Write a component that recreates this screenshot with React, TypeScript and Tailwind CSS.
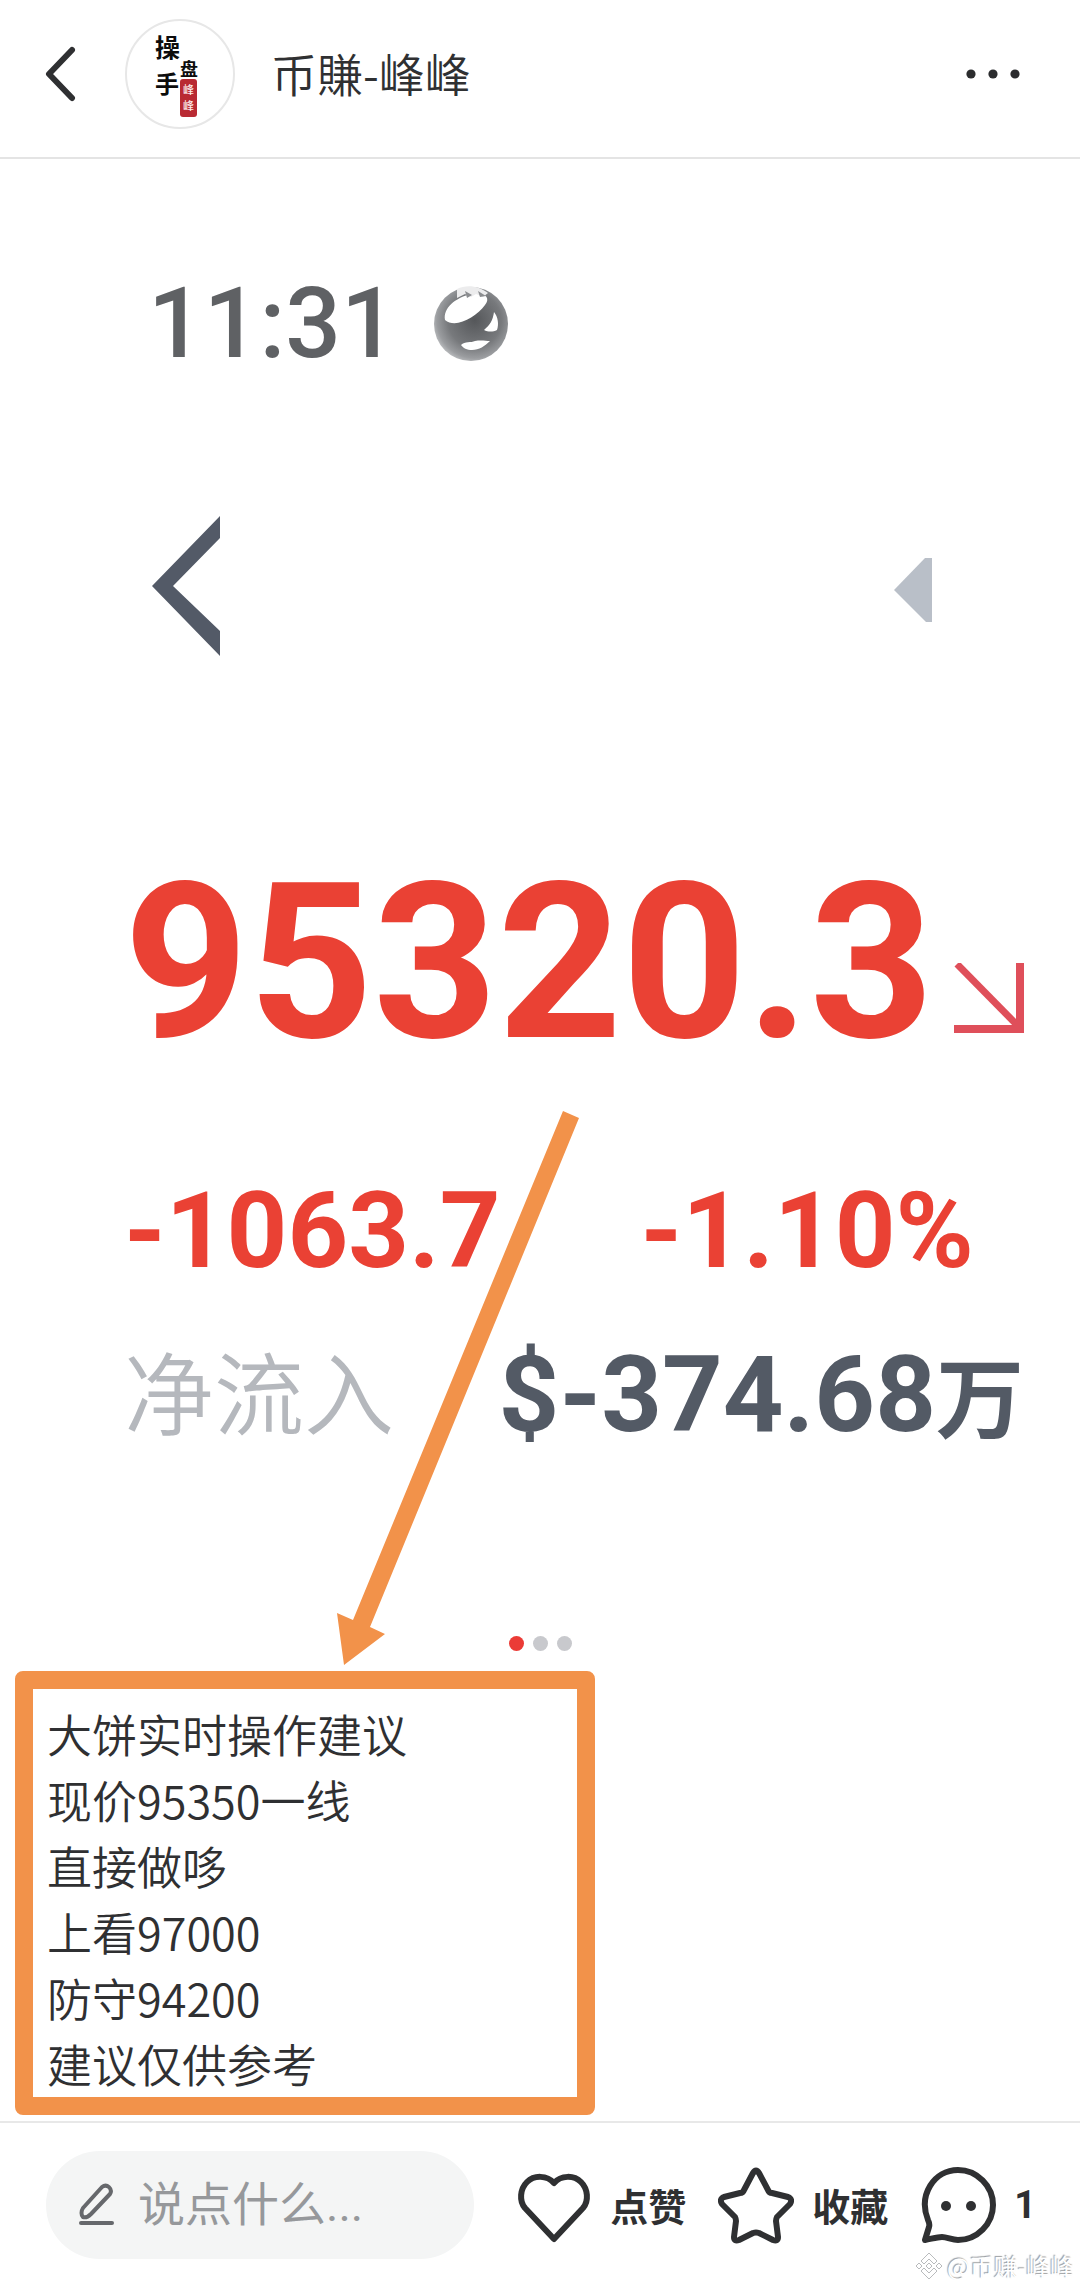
// src/pages/PostDetail.tsx
import { useState } from "react";

const ADVICE = [
  "大饼实时操作建议",
  "现价95350一线",
  "直接做哆",
  "上看97000",
  "防守94200",
  "建议仅供参考",
];

const SLIDES = [0, 1, 2];

function Avatar() {
  return (
    <svg viewBox="0 0 110 110" className="h-[110px] w-[110px] shrink-0" role="img" aria-label="操盘手峰峰">
      <circle cx="55" cy="55" r="54" fill="#fff" stroke="#e7e7e7" strokeWidth="2" />
      <g fill="#0c0c0c" fontWeight="700" className="font-['Noto_Sans_CJK_SC',sans-serif]">
        <text x="30" y="38" fontSize="25">操</text>
        <text x="55" y="57" fontSize="18">盘</text>
        <text x="30" y="74" fontSize="24">手</text>
      </g>
      <rect x="55" y="60" width="17" height="38" rx="3" fill="#b92a33" />
      <g fill="#fbe9e9" fontSize="11" fontWeight="500" className="font-['Noto_Sans_CJK_SC',sans-serif]">
        <text x="58" y="75">峰</text>
        <text x="58" y="91">峰</text>
      </g>
    </svg>
  );
}

function Globe() {
  return (
    <svg viewBox="0 0 76 76" className="h-[76px] w-[76px]" aria-hidden="true">
      <defs>
        <radialGradient id="globe" cx="0.55" cy="0.45" r="0.6">
          <stop offset="0" stopColor="#55575a" />
          <stop offset="0.6" stopColor="#77797c" />
          <stop offset="0.85" stopColor="#9a9c9f" />
          <stop offset="1" stopColor="#c4c6c8" />
        </radialGradient>
      </defs>
      <circle cx="38" cy="38" r="37" fill="url(#globe)" />
      <path d="M12 34C10 22 22 12 38 8c14-3 20 4 14 11-9 12-29 24-40 15z" fill="#fff" />
      <path d="M24 3c10-5 22-3 31 4l-5 4-7-3-5 3-6-3-8 4z" fill="#ececed" />
      <path d="M32 5l7 4-5 3zM45 5l8 5-6 1z" fill="#8b8d90" />
      <path d="M51 44c6-5 9-10 10-18 4 5 5 12 3 18-4 2-9 2-13 0z" fill="#fff" />
      <path d="M28 59c4-4 10-2 14-4 6-1 11 0 15 0-5 5-11 9-18 9-5 0-9-2-11-5z" fill="#fff" />
    </svg>
  );
}

export default function PostDetail() {
  const [slide, setSlide] = useState(0);
  const [comment, setComment] = useState("");

  return (
    <div className="flex min-h-screen flex-col bg-white font-['Noto_Sans_CJK_SC',sans-serif] text-[#2f3032]">
      {/* Header */}
      <header className="flex items-center border-b-2 border-[#e4e4e4] pt-[19px] pr-[60px] pb-7 pl-[45px]">
        <button type="button" aria-label="返回" className="mr-12">
          <svg viewBox="0 0 32 56" className="h-14 w-8" fill="none" stroke="#2f3032" strokeWidth="6" strokeLinecap="round" strokeLinejoin="round">
            <path d="M27 4 4 28l23 24" />
          </svg>
        </button>
        <Avatar />
        <h1 className="ml-9 flex-1 pb-1 text-[46px] leading-[56px] font-[350]">币賺-峰峰</h1>
        <button type="button" aria-label="更多">
          <svg viewBox="0 0 54 10" className="h-[10px] w-[54px]" fill="#2b2c2e">
            <circle cx="5" cy="5" r="4.600" />
            <circle cx="27" cy="5" r="4.600" />
            <circle cx="49" cy="5" r="4.600" />
          </svg>
        </button>
      </header>

      <main className="relative flex-1">
        {/* Post picture */}
        <section className="font-[Roboto,'Noto_Sans_CJK_SC',sans-serif]">
          <div className="flex items-center gap-9 pt-[105px] pl-[148px] text-[#5f6164]">
            <span className="text-[98px] leading-[120px] font-medium">11:31</span>
            <Globe />
          </div>

          <div className="flex items-center justify-between pt-[132px] pr-[148px] pl-[152px]">
            <svg viewBox="0 0 68 140" className="h-[140px] w-[68px]" fill="#535a67">
              <path d="M68 0v22L21 70l47 45v25L0 70z" />
            </svg>
            <svg viewBox="0 0 38 64" className="mt-2 h-16 w-[38px]" fill="#b9bfc8">
              <path d="M31 0h7v64h-6L0 32z" />
            </svg>
          </div>

          <div className="flex items-end gap-5 pt-[181px] pl-[124px] text-[#ea4134]">
            <span className="text-[217px] leading-[252px] font-bold">95320.3</span>
            <svg viewBox="0 0 70 70" className="mb-14 h-[70px] w-[70px]" fill="none" stroke="#df4f5a">
              <path d="m3 1 62 63" strokeWidth="7" />
              <path d="M66 0v66H0" strokeWidth="8" />
            </svg>
          </div>

          <div className="flex gap-[140px] pt-[78px] pl-[124px] text-[106px] leading-[128px] font-bold text-[#ea4134]">
            <span>-1063.7</span>
            <span>-1.10%</span>
          </div>

          <div className="flex items-center justify-between pt-9 pr-14 pl-[124px]">
            <span className="text-[90px] leading-[128px] font-[350] text-[#b5b8bd]">净流入</span>
            <span className="text-[#535a65]">
              <span className="text-[106px] leading-[128px] font-bold">$-374.68</span>
              <span className="text-[88px] leading-[128px] font-bold">万</span>
            </span>
          </div>
        </section>

        <div className="flex justify-center gap-[9px] pt-[171px]">
          {SLIDES.map((n) => (
            <button
              key={n}
              type="button"
              aria-label={`第${n + 1}张`}
              onClick={() => setSlide(n)}
              className={slide === n ? "size-[15px] rounded-full bg-[#eb3b36]" : "size-[15px] rounded-full bg-[#c8c9cd]"}
            />
          ))}
        </div>

        {/* Advice */}
        <section className="mt-5 mb-1 ml-[15px] w-[580px] rounded-lg border-[18px] border-[#f2924a] px-3.5 pt-3 text-[45px] leading-[66px] font-[350]">
          {ADVICE.map((line) => (
            <p key={line}>{line}</p>
          ))}
        </section>

        {/* Arrow drawn over the picture */}
        <svg viewBox="0 0 250 560" className="pointer-events-none absolute top-[952px] left-[335px] h-[560px] w-[250px]" fill="#f2924a" aria-hidden="true">
          <path d="M228 0l16 7L35 516l15 7L9 554 2 502l16 7z" />
        </svg>
      </main>

      {/* Bottom bar */}
      <footer className="relative flex items-center border-t-2 border-[#e8e8e8] pt-7 pr-11 pb-[29px] pl-[46px]">
        <label className="flex h-[108px] min-w-0 flex-1 items-center rounded-full bg-[#f4f5f5] pl-8">
          <svg viewBox="0 0 36 44" className="h-11 w-9 shrink-0" fill="none" stroke="#66686c" strokeWidth="4" strokeLinecap="round" strokeLinejoin="round">
            <path d="M24 4c5-4 11 2 8 7L13 31c-3 3-5 4-8 3-2-2-2-6 0-9z" />
            <path d="M3 40h31" />
          </svg>
          <input
            type="text"
            aria-label="说点什么"
            placeholder="说点什么..."
            value={comment}
            onChange={(e) => setComment(e.target.value)}
            className="ml-6 w-full min-w-0 bg-transparent font-[Roboto,'Noto_Sans_CJK_SC',sans-serif] text-[47px] leading-[60px] outline-none placeholder:text-[#96989b]"
          />
        </label>

        <button type="button" className="ml-[42px] flex items-center gap-[18px] text-[38px] leading-[48px] font-bold">
          <svg viewBox="0 0 76 78" className="h-[78px] w-[76px]" fill="none" stroke="#2f3032" strokeWidth="6" strokeLinejoin="round">
            <path d="M38 17C31 9 18 9 11 16S3 35 9 42l29 31 29-31c6-7 5-19-2-26s-20-7-27 1z" />
          </svg>
          点赞
        </button>
        <button type="button" className="ml-8 flex items-center gap-[18px] text-[38px] leading-[48px] font-bold">
          <svg viewBox="0 0 76 78" className="h-[78px] w-[76px]" fill="none" stroke="#2f3032" strokeWidth="6" strokeLinejoin="round">
            <path d="M35 7q3-5 6 0l9 17q1 3 4 3l16 4q5 2 2 7L59 51q-1 2-1 4l2 16q0 5-5 3L41 67q-3-1-6 0l-14 7q-5 2-5-3l2-16q0-2-1-4L4 38q-3-5 2-7l16-4q3 0 4-3z" />
          </svg>
          收藏
        </button>
        <button type="button" aria-label="评论 1" className="ml-8 flex items-center gap-[18px] font-[Roboto,'Noto_Sans_CJK_SC',sans-serif] text-[38px] leading-[48px] font-bold">
          <svg viewBox="0 0 76 78" className="h-[78px] w-[76px]" fill="none" stroke="#2f3032" strokeWidth="6" strokeLinejoin="round">
            <path d="M5 74l4-13q1-3-1-7C-2 29 14 4 38 4c19 0 35 16 35 35S57 74 38 74c-6 0-11-3-16-3s-11 2-17 3z" />
            <circle cx="26" cy="40" r="5" fill="#2f3032" stroke="none" />
            <circle cx="51" cy="40" r="5" fill="#2f3032" stroke="none" />
          </svg>
          1
        </button>

        {/* Watermark */}
        <div className="absolute right-1.5 bottom-1.5 flex items-center gap-1 text-[24px] leading-8 text-white [text-shadow:-1px_-1px_1px_#9a9c9e]">
          <svg viewBox="0 0 28 28" className="size-7" fill="#fff" stroke="#b9bbbd" strokeWidth="1">
            <path d="M6 9l8-8 8 8-3 3-5-5-5 5zM1 14l3-3 3 3-3 3zM27 14l-3-3-3 3 3 3zM14 11l3 3-3 3-3-3zM6 19l3-3 5 5 5-5 3 3-8 8z" />
          </svg>
          <span>@币赚-峰峰</span>
        </div>
      </footer>
    </div>
  );
}
